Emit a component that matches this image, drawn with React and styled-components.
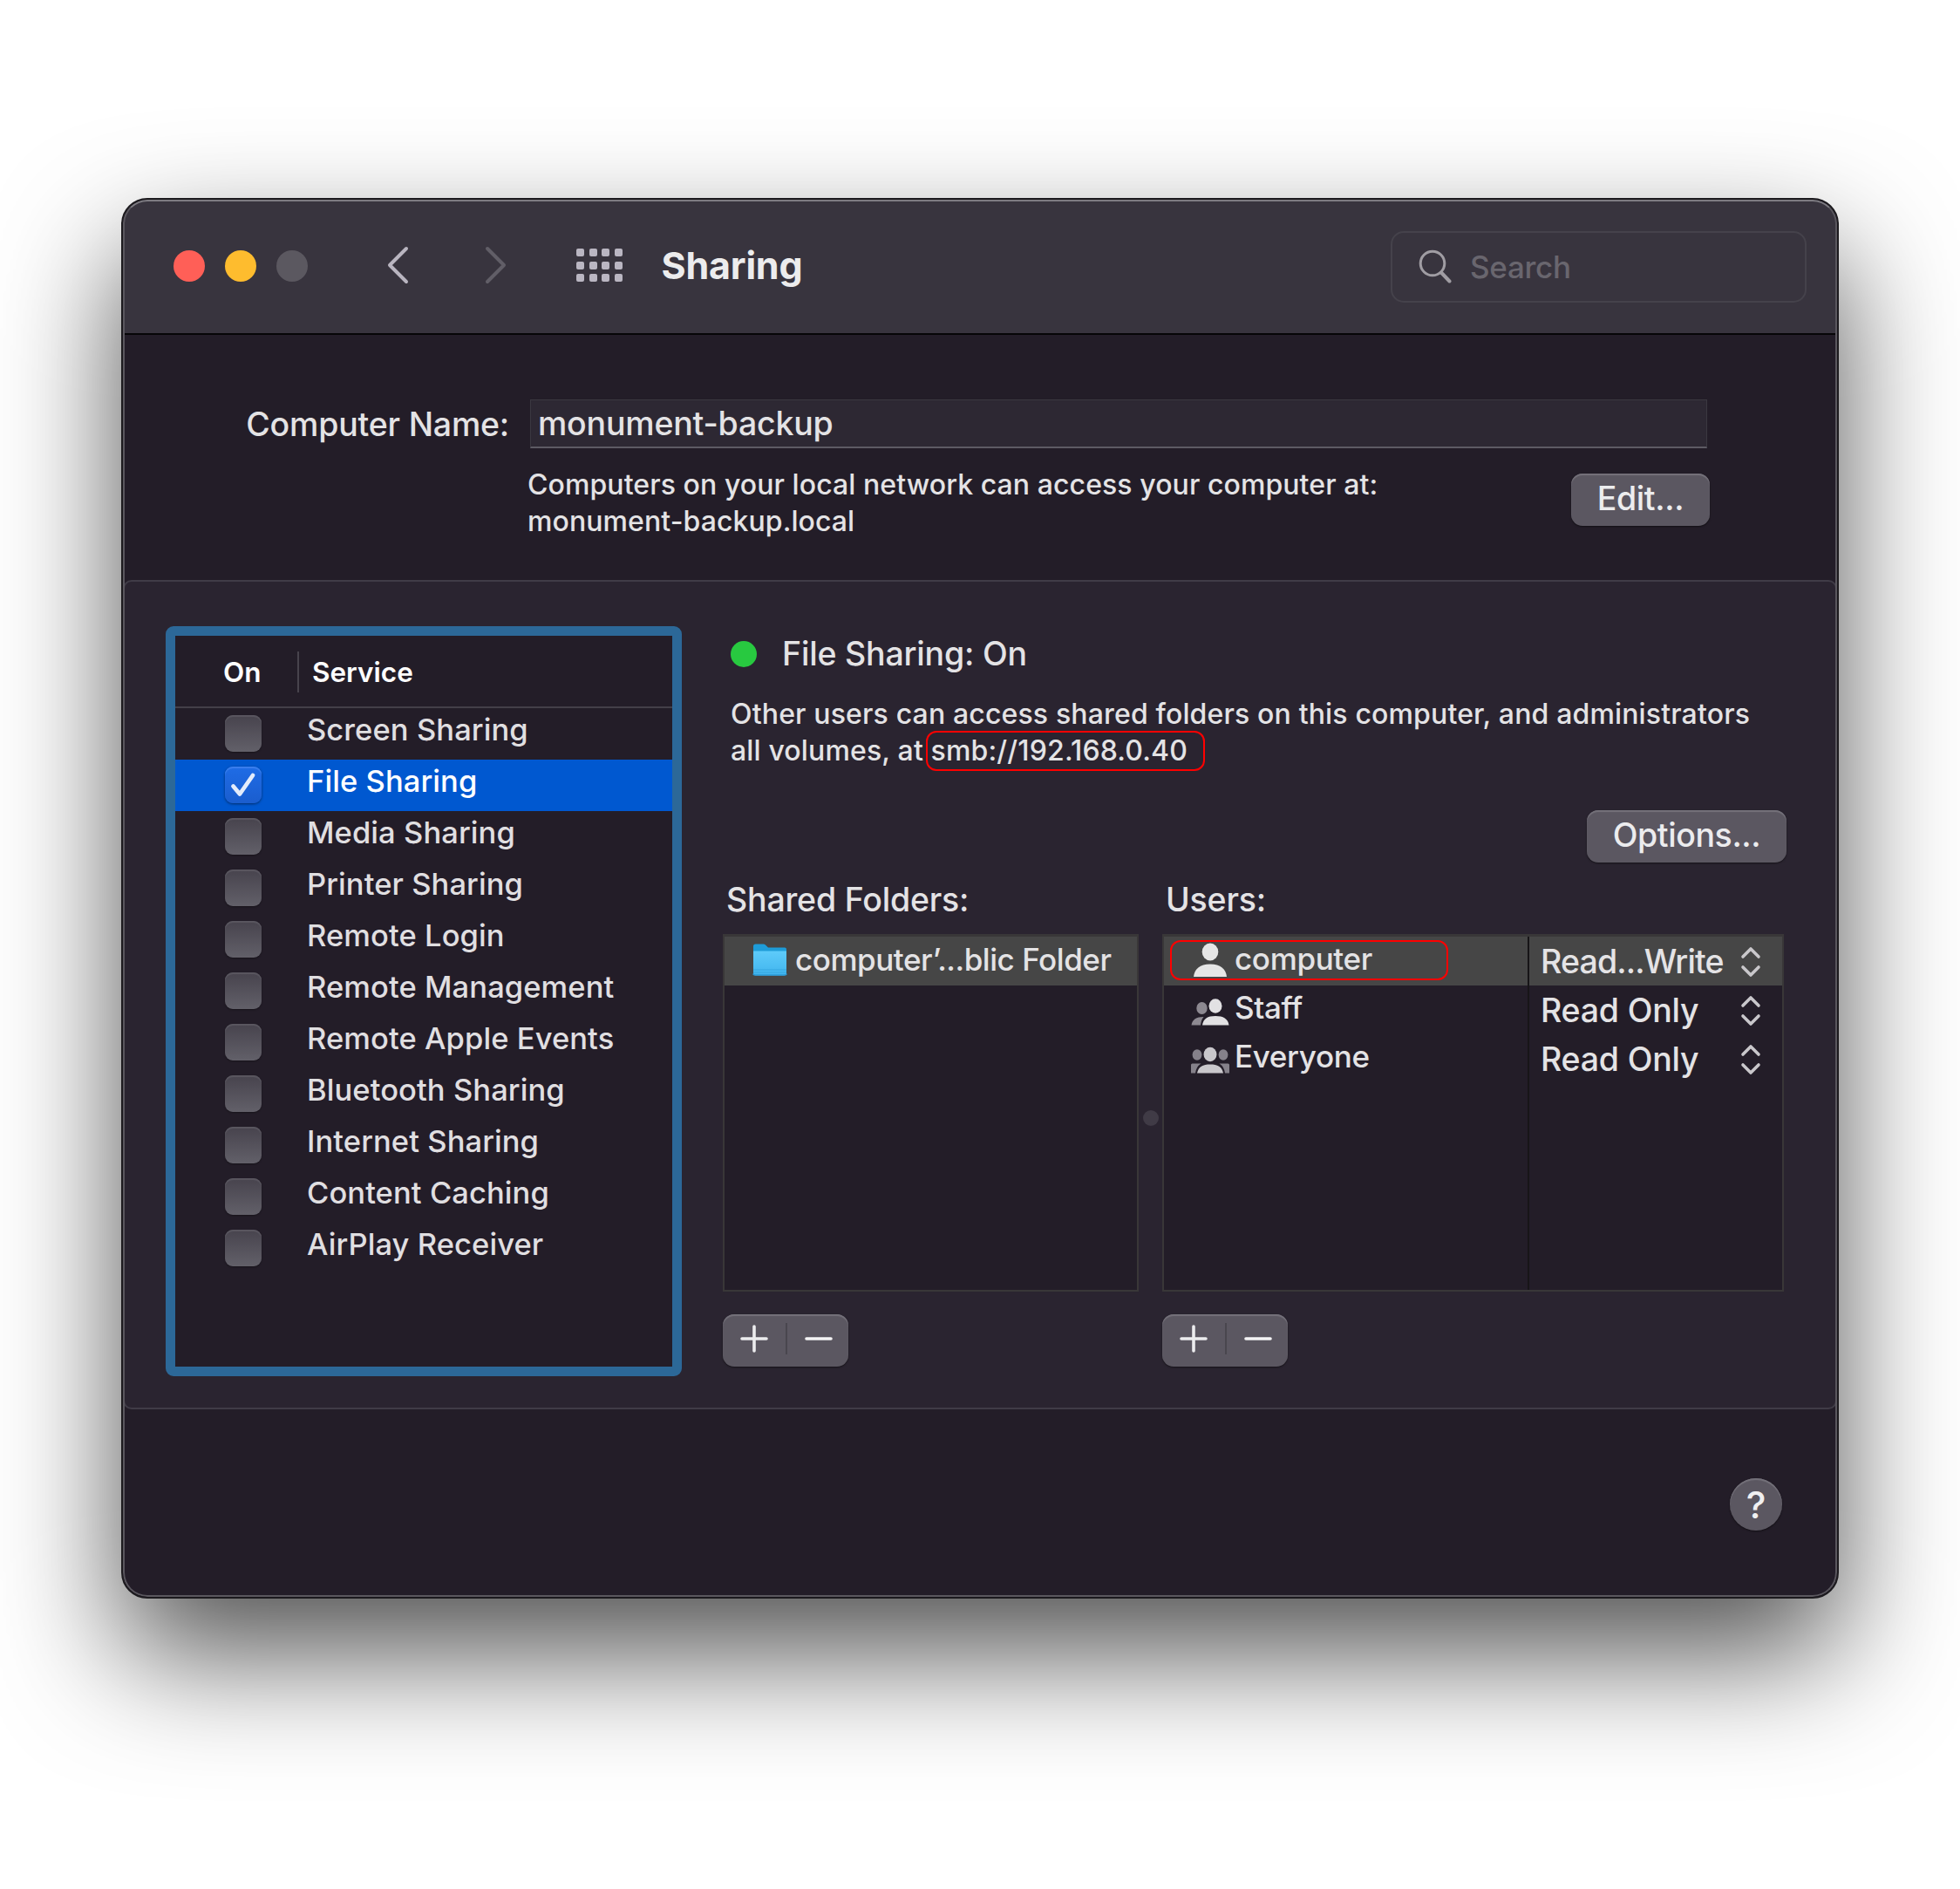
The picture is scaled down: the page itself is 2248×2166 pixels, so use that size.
import styled, { createGlobalStyle, css } from "styled-components";

const services = [
  "Screen Sharing",
  "File Sharing",
  "Media Sharing",
  "Printer Sharing",
  "Remote Login",
  "Remote Management",
  "Remote Apple Events",
  "Bluetooth Sharing",
  "Internet Sharing",
  "Content Caching",
  "AirPlay Receiver",
];

const users = [
  { name: "computer", icon: "one", access: "Read...Write" },
  { name: "Staff", icon: "two", access: "Read Only" },
  { name: "Everyone", icon: "three", access: "Read Only" },
];

const Chevron = ({ right }) => (
  <svg width="26" height="46" viewBox="0 0 26 46" fill="none" stroke={right ? "#615e67" : "#b9b5c0"} strokeWidth="4" strokeLinecap="round" strokeLinejoin="round">
    <path d={right ? "M3 4L22 23L3 42" : "M23 4L4 23L23 42"} />
  </svg>
);

const SearchIcon = () => (
  <svg width="38" height="40" viewBox="0 0 38 40" fill="none" stroke="#a09da3" strokeLinecap="round">
    <circle cx="16" cy="16" r="13.8" strokeWidth="3" />
    <path d="M26 26.5L35.5 36.5" strokeWidth="4" />
  </svg>
);

const FolderIcon = () => (
  <svg width="40" height="40" viewBox="0 0 40 40">
    <defs>
      <linearGradient id="folder" x1="0" y1="0" x2="0" y2="1">
        <stop offset="0" stopColor="#5ecbfa" />
        <stop offset="1" stopColor="#41b5ee" />
      </linearGradient>
    </defs>
    <path d="M1 4Q1 1.5 3.5 1.5H12.5Q14 1.5 15 2.5L18 5.5H37Q39 5.5 39 7.5V20H1Z" fill="#1e9cd8" />
    <path d="M1 9.5H39V35.5Q39 37.5 36.5 37.5H3.5Q1 37.5 1 35.5Z" fill="url(#folder)" />
    <path d="M1 31H39M1 34H39" stroke="#35a6e0" strokeWidth="1" />
    <path d="M1 35.5Q1 37 3.5 37H36.5Q39 37 39 35.5" fill="none" stroke="#2b9bd6" strokeWidth="1.5" />
  </svg>
);

const UserIcon = ({ type }) => {
  if (type === "one") {
    return (
      <svg width="44" height="42" viewBox="0 0 44 42" fill="#e6e6e6">
        <ellipse cx="22" cy="11.5" rx="9.3" ry="10" />
        <path d="M3 40C4 31 10 25.5 22 25.5S40 31 41 40Z" />
      </svg>
    );
  }
  if (type === "two") {
    return (
      <svg width="44" height="42" viewBox="0 0 44 42">
        <g fill="#8d8991">
          <ellipse cx="12.5" cy="20" rx="6.2" ry="7" />
          <path d="M0.5 39.5C1.5 33 6 30 14.5 30C12 33 11.5 36 11 39.5Z" />
        </g>
        <g fill="#e2e1e3">
          <ellipse cx="28" cy="17.5" rx="7.5" ry="8.3" />
          <path d="M13 39.5C14 32 19 29 28 29S42.5 32 43.5 39.5Z" />
        </g>
      </svg>
    );
  }
  return (
    <svg width="44" height="42" viewBox="0 0 44 42">
      <g fill="#85818a">
        <ellipse cx="7" cy="17.5" rx="5.4" ry="6.2" />
        <ellipse cx="37" cy="17.5" rx="5.4" ry="6.2" />
        <path d="M0 38.5V29Q0 27.5 1.5 27.5H11.5Q6 31 5 38.5Z" />
        <path d="M44 38.5V29Q44 27.5 42.5 27.5H32.5Q38 31 39 38.5Z" />
      </g>
      <g fill="#c9c7cb">
        <ellipse cx="22" cy="17" rx="7.5" ry="8.3" />
        <path d="M7 38.5C8.5 31 13.5 28.5 22 28.5S35.5 31 37 38.5Z" />
      </g>
    </svg>
  );
};

const UpDown = () => (
  <svg width="24" height="36" viewBox="0 0 24 36" fill="none" stroke="#c9c7cb" strokeWidth="3.6" strokeLinecap="round" strokeLinejoin="round">
    <path d="M3 12L12 3L21 12M3 24L12 33L21 24" />
  </svg>
);

const AddRemove = () => (
  <Segmented>
    <svg width="32" height="32" viewBox="0 0 32 32" stroke="#ececee" strokeWidth="3.6" strokeLinecap="round">
      <path d="M2 16H30M16 2V30" />
    </svg>
    <SegmentLine />
    <svg width="32" height="32" viewBox="0 0 32 32" stroke="#f4f4f5" strokeWidth="3.6" strokeLinecap="round">
      <path d="M2 16H30" />
    </svg>
  </Segmented>
);

const App = () => {
  return (
    <>
      <GlobalStyle />
      <Desktop>
        <Window>
          <Toolbar>
            <Lights>
              <Light color="#ff5f57" />
              <Light color="#febc2e" />
              <Light color="#5b5860" />
            </Lights>
            <Arrows>
              <Chevron />
              <Chevron right />
            </Arrows>
            <Dots>
              {Array.from({ length: 12 }, (_, i) => (
                <i key={i} />
              ))}
            </Dots>
            <Title>Sharing</Title>
            <Search>
              <SearchIcon />
              <span>Search</span>
            </Search>
          </Toolbar>

          <NameArea>
            <NameLabel>Computer Name:</NameLabel>
            <div>
              <NameInput>monument-backup</NameInput>
              <NameInfo>
                <Small $track={0.08}>
                  Computers on your local network can access your computer at:
                  <br />
                  monument-backup.local
                </Small>
                <Button $width={159}>Edit...</Button>
              </NameInfo>
            </div>
          </NameArea>

          <Panel>
            <ServiceList>
              <ServiceHead>
                <span>On</span>
                <span>Service</span>
              </ServiceHead>
              {services.map((name) => {
                const on = name === "File Sharing";
                return (
                  <ServiceRow key={name} $on={on}>
                    <Check $on={on}>
                      {on && (
                        <svg width="30" height="30" viewBox="0 0 30 30" fill="none" stroke="#e4ecfb" strokeWidth="4.8" strokeLinecap="round" strokeLinejoin="round">
                          <path d="M3.5 16.5L11 25.5L26 4" />
                        </svg>
                      )}
                    </Check>
                    <span>{name}</span>
                  </ServiceRow>
                );
              })}
            </ServiceList>

            <Detail>
              <Status>
                <i />
                <span>File Sharing: On</span>
              </Status>
              <DetailText>
                <Small $track={0.15}>
                  Other users can access shared folders on this computer, and administrators
                  <br />
                  all volumes, at <Address>smb://192.168.0.40</Address>
                </Small>
              </DetailText>
              <OptionsLine>
                <Button $width={229}>Options...</Button>
              </OptionsLine>
              <Lists>
                <div>
                  <Label>Shared Folders:</Label>
                  <ListBox $width={477}>
                    <FolderRow>
                      <FolderIcon />
                      <span>computer’...blic Folder</span>
                    </FolderRow>
                  </ListBox>
                  <AddRemove />
                </div>
                <Splitter />
                <div>
                  <Label>Users:</Label>
                  <ListBox $width={713}>
                    <UserTable>
                      <UserColumn>
                        {users.map((u, i) => (
                          <UserRow key={u.name} $selected={i === 0}>
                            <UserName $marked={i === 0}>
                              <UserIcon type={u.icon} />
                              <span>{u.name}</span>
                            </UserName>
                          </UserRow>
                        ))}
                      </UserColumn>
                      <div>
                        {users.map((u, i) => (
                          <AccessRow key={u.name} $selected={i === 0}>
                            <span>{u.access}</span>
                            <UpDown />
                          </AccessRow>
                        ))}
                      </div>
                    </UserTable>
                  </ListBox>
                  <AddRemove />
                </div>
              </Lists>
            </Detail>
          </Panel>

          <Footer>
            <Help>?</Help>
          </Footer>
        </Window>
      </Desktop>
    </>
  );
};

export default App;

const GlobalStyle = createGlobalStyle`
  * {
    box-sizing: border-box;
  }

  body {
    margin: 0;
    background: #fff;
    font-family: Inter, "Liberation Sans", sans-serif;
    font-weight: 450;
    letter-spacing: -0.2px;
    color: #e4e3e5;
  }

  svg {
    display: block;
    flex: none;
  }
`;

const Desktop = styled.div`
  width: 2248px;
  height: 2166px;
  padding: 227px 139px 0 139px;
  overflow: hidden;
  background: #fff;
`;

const Window = styled.div`
  height: 1606px;
  display: flex;
  flex-direction: column;
  overflow: hidden;
  background: #231d28;
  border: 2px solid #1c1a1e;
  border-radius: 30px;
  box-shadow: 0 64px 140px rgba(0, 0, 0, 0.68);
  position: relative;

  /* light rim on the inner edge */
  &::after {
    content: "";
    position: absolute;
    inset: 0;
    border: 2px solid #5a575e;
    border-top-color: #7d7b81;
    border-radius: 28px;
    pointer-events: none;
  }
`;

const Toolbar = styled.div`
  height: 155px;
  flex: none;
  display: flex;
  align-items: center;
  padding: 0 35px 0 58px;
  background: #38343e;
  border-bottom: 2px solid #060507;
`;

const Lights = styled.div`
  display: flex;
  gap: 23px;
  margin-bottom: 1px;
`;

const Light = styled.i`
  width: 36px;
  height: 36px;
  border-radius: 50%;
  background: ${(p) => p.color};
`;

const Arrows = styled.div`
  display: flex;
  gap: 87px;
  margin-left: 90px;
  margin-bottom: 3px;
`;

const Dots = styled.div`
  display: grid;
  grid-template-columns: repeat(4, 9px);
  gap: 5.5px;
  margin-left: 79px;
  margin-bottom: 3px;

  i {
    height: 9px;
    border-radius: 2px;
    background: #bab6c2;
  }
`;

const Title = styled.span`
  margin-left: 45px;
  margin-bottom: 4px;
  font-size: 43px;
  font-weight: 700;
  color: #ececed;
`;

const Search = styled.div`
  width: 477px;
  height: 82px;
  margin-left: auto;
  padding-left: 30px;
  display: flex;
  align-items: center;
  gap: 21px;
  border: 2px solid #45424b;
  border-radius: 15px;
  font-size: 35px;
  letter-spacing: -0.3px;
  color: #69666e;
`;

const NameArea = styled.div`
  height: 281px;
  flex: none;
  display: grid;
  grid-template-columns: 467px 1353px;
  padding-top: 74px;
`;

const NameLabel = styled.span`
  padding-right: 24px;
  text-align: right;
  font-size: 37.5px;
  line-height: 57px;
`;

const NameInput = styled.div`
  width: 1350px;
  height: 56px;
  padding-left: 8px;
  background: #2d2833;
  border: 1px solid #3b3841;
  border-bottom: 2px solid #5d5a64;
  font-size: 37.5px;
  line-height: 54px;
`;

const NameInfo = styled.div`
  display: flex;
  justify-content: space-between;
  align-items: flex-start;
  padding-top: 29px;
  margin-left: -3px;
`;

const Small = styled.p`
  margin: -8px 0 0;
  font-size: 32px;
  line-height: 41.5px;
  letter-spacing: ${(p) => p.$track}px;
  white-space: nowrap;
`;

const raised = css`
  background: #5b5761;
  box-shadow: inset 0 2px 1px #75727b, 0 1px 2px rgba(0, 0, 0, 0.5);
`;

const Button = styled.div`
  ${raised}
  width: ${(p) => p.$width}px;
  height: 60px;
  flex: none;
  border-radius: 13px;
  text-align: center;
  font-size: 37.5px;
  line-height: 57px;
  letter-spacing: -0.4px;
  color: #ececee;
`;

const Panel = styled.div`
  height: 951px;
  flex: none;
  display: flex;
  background: #2a2430;
  border: 2px solid #403c47;
  border-radius: 10px;
  padding: 51px 0 0 47px;
`;

const ServiceList = styled.div`
  width: 592px;
  height: 860px;
  flex: none;
  background: #231d28;
  border: 11px solid #2c6898;
  border-radius: 9px;
`;

const ServiceHead = styled.div`
  height: 83px;
  display: grid;
  grid-template-columns: 142px 1fr;
  align-items: center;
  padding-top: 1px;
  border-bottom: 2px solid #433f48;
  font-size: 31.5px;
  font-weight: 600;
  letter-spacing: 0;
  color: #fff;

  span:first-child {
    height: 47px;
    line-height: 47px;
    padding-left: 55px;
    border-right: 2px solid #47434c;
  }

  span:last-child {
    padding-left: 15px;
  }
`;

const ServiceRow = styled.div`
  height: 59px;
  display: flex;
  gap: 52px;
  padding: 8px 0 0 57px;
  font-size: 34.5px;
  line-height: 34px;
  letter-spacing: 0.08px;
  background: ${(p) => (p.$on ? "#0058d0" : "none")};
  color: ${(p) => (p.$on ? "#fff" : "#e0dfe1")};
`;

const Check = styled.i`
  width: 42px;
  height: 42px;
  display: flex;
  align-items: center;
  justify-content: center;
  border-radius: 9px;
  background: linear-gradient(#47434d, #626069);
  box-shadow: inset 0 2px 1px #5a5760, 0 1px 2px rgba(0, 0, 0, 0.35);

  ${(p) =>
    p.$on &&
    css`
      background: linear-gradient(#1f6ce6, #1a5dce);
      box-shadow: inset 0 2px 1px #3a7fee, 0 1px 3px rgba(0, 0, 0, 0.5);
    `}
`;

const Detail = styled.div`
  margin-left: 47px;
  width: 1220px;
`;

const Status = styled.div`
  display: flex;
  align-items: center;
  height: 63px;
  padding-left: 9px;
  font-size: 37.5px;

  i {
    width: 30px;
    height: 30px;
    margin-right: 29px;
    border-radius: 50%;
    background: #28c940;
  }
`;

const DetailText = styled.div`
  padding: 25px 0 0 9px;
`;

const Address = styled.span`
  position: relative;

  /* highlight ring around the address */
  &::after {
    content: "";
    position: absolute;
    inset: -3px -20px -4px -6px;
    border: 2px solid #f00;
    border-radius: 12px;
  }
`;

const OptionsLine = styled.div`
  display: flex;
  justify-content: flex-end;
  margin-top: 48px;
`;

const Lists = styled.div`
  display: flex;
`;

const Label = styled.div`
  height: 82px;
  padding: 18px 0 0 4px;
  font-size: 37.5px;
  line-height: 50px;
`;

const ListBox = styled.div`
  width: ${(p) => p.$width}px;
  height: 410px;
  margin-bottom: 26px;
  background: #231d28;
  border: 2px solid #393738;
  border-top-width: 3px;
`;

const FolderRow = styled.div`
  height: 56px;
  display: flex;
  align-items: center;
  gap: 9px;
  padding: 0 0 2px 32px;
  background: #464646;
  font-size: 35px;
  letter-spacing: -0.45px;

  span {
    margin-top: -2px;
  }
`;

const Splitter = styled.i`
  width: 18px;
  height: 18px;
  flex: none;
  margin: 284px 4px 0 5px;
  border-radius: 50%;
  background: #403b46;
`;

const UserTable = styled.div`
  height: 100%;
  display: grid;
  grid-template-columns: 419px 1fr;
`;

const UserColumn = styled.div`
  border-right: 2px solid #171518;
`;

const UserRow = styled.div`
  height: 56px;
  padding: 4px 0 0 7px;
  background: ${(p) => (p.$selected ? "#464646" : "none")};
`;

const UserName = styled.div`
  width: 319px;
  height: 46px;
  display: flex;
  align-items: center;
  gap: 6px;
  padding-left: 22px;
  border: 2px solid ${(p) => (p.$marked ? "#f00" : "transparent")};
  border-radius: 12px;
  font-size: 35px;
  letter-spacing: -0.35px;

  span {
    margin-top: -4px;
  }
`;

const AccessRow = styled.div`
  height: 56px;
  display: flex;
  align-items: center;
  justify-content: space-between;
  padding: 1px 24px 0 13px;
  background: ${(p) => (p.$selected ? "#464646" : "none")};
  font-size: 37.5px;
  letter-spacing: ${(p) => (p.$selected ? "-0.85px" : "-0.2px")};
`;

const Segmented = styled.div`
  ${raised}
  width: 144px;
  height: 60px;
  display: flex;
  align-items: center;
  justify-content: space-between;
  padding: 0 18px 4px 20px;
  border-radius: 13px;
`;

const SegmentLine = styled.i`
  width: 2px;
  height: 36px;
  background: #49464e;
`;

const Footer = styled.div`
  flex: 1;
  display: flex;
  justify-content: flex-end;
  padding: 79px 63px 0 0;
`;

const Help = styled.div`
  ${raised}
  width: 60px;
  height: 60px;
  border-radius: 50%;
  text-align: center;
  font-size: 43px;
  font-weight: 500;
  line-height: 60px;
  color: #f0f0f1;
`;
